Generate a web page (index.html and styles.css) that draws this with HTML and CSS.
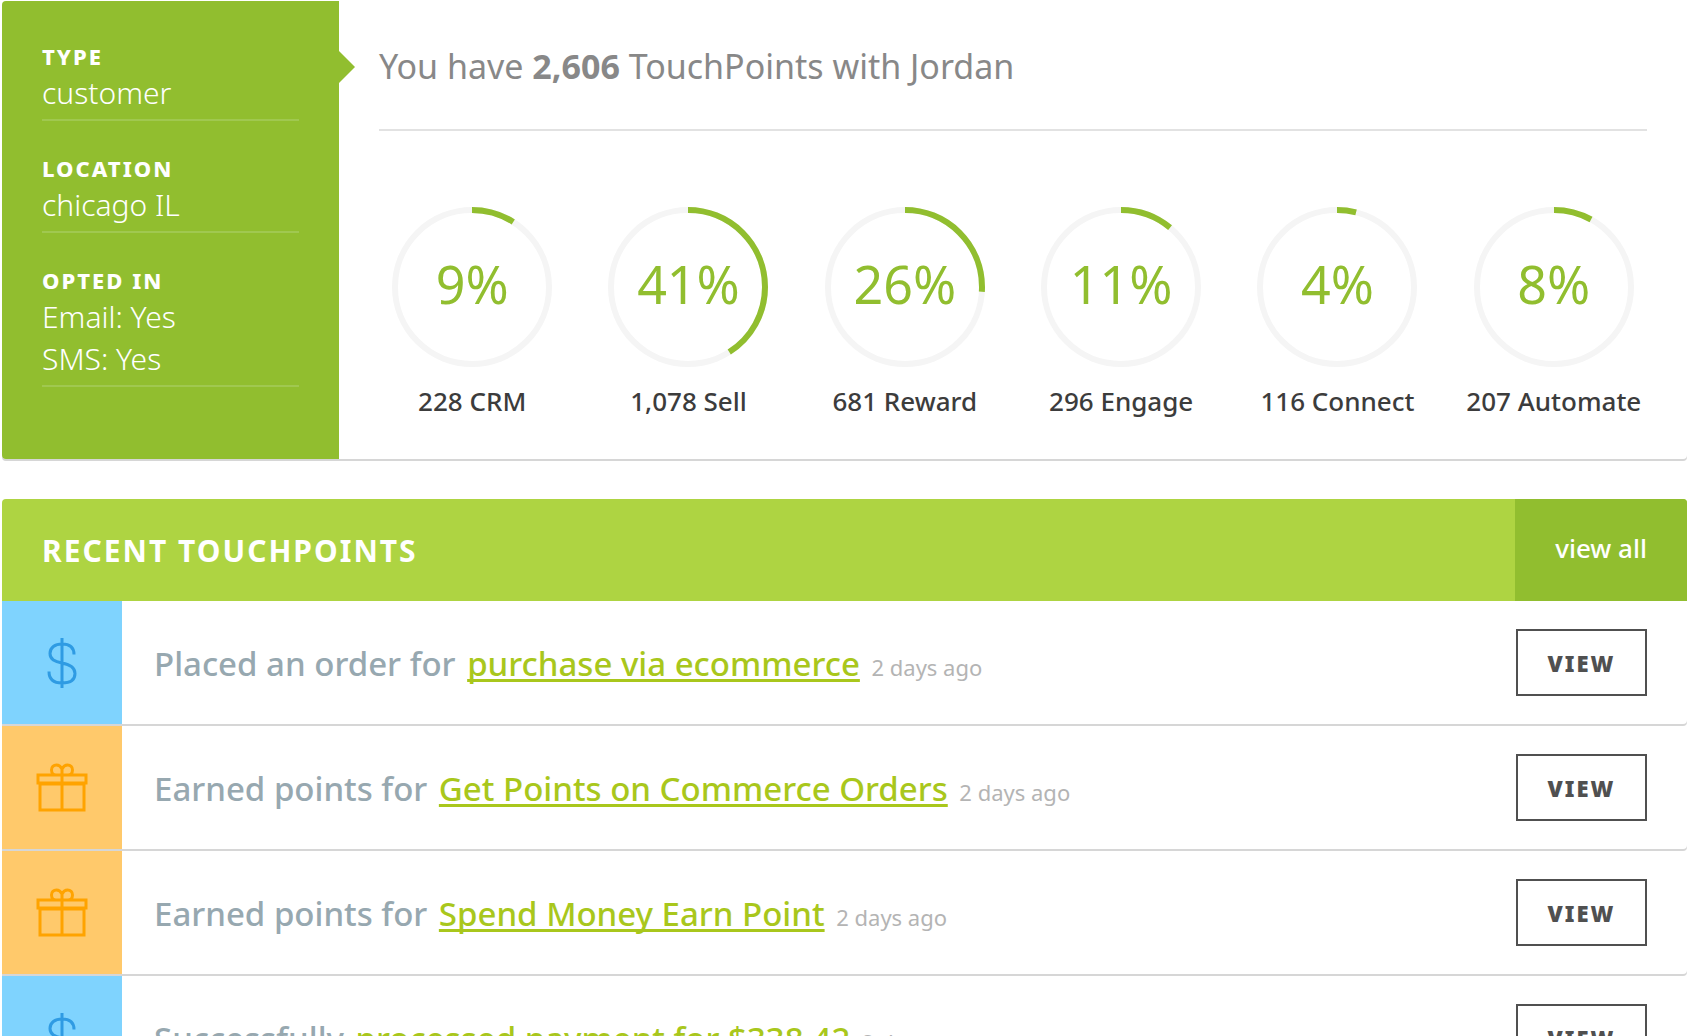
FILE: index.html
```html
<!DOCTYPE html>
<html lang="en">
<head>
    <meta charset="UTF-8">
    <meta name="viewport" content="width=device-width, initial-scale=1.0">
    <title>Customer TouchPoints</title>
    <link rel="stylesheet" href="styles.css">
</head>
<body>
    <!-- shared icons -->
    <svg class="icon-defs" aria-hidden="true">
        <symbol id="icon-dollar" viewBox="0 0 52 52">
            <path d="M26 1v50M38 17.500C38 10 33 7 26 7S14 10.500 14 16.500c0 6 5 8 12 9.500 8 1.500 13 4 13 10.500S34 46 26 46 13 42.500 13 34.500"/>
        </symbol>
        <symbol id="icon-gift" viewBox="0 0 52 52">
            <path d="M2 13h48v8H2zM4 22h44v26H4zM26 6v42M26 7c-1-2-3-4-5.500-4C17.500 3 15.500 5 15.500 8s2 5 4.500 5M26 7c1-2 3-4 5.500-4C34.500 3 36.500 5 36.500 8s-2 5-4.500 5"/>
        </symbol>
    </svg>

    <section class="card summary">
        <aside class="sidebar">
            <dl class="info">
                <dt>TYPE</dt>
                <dd>customer</dd>
            </dl>
            <dl class="info">
                <dt>LOCATION</dt>
                <dd>chicago IL</dd>
            </dl>
            <dl class="info">
                <dt>OPTED IN</dt>
                <dd>Email: Yes</dd>
                <dd>SMS: Yes</dd>
            </dl>
        </aside>
        <div class="overview">
            <h1>You have <strong>2,606</strong> TouchPoints with Jordan</h1>
            <div class="charts">
                <div class="chart">
                    <div class="ring">
                        <svg viewBox="0 0 160 160"><circle cx="80" cy="80" r="77"/><circle class="value" cx="80" cy="80" r="77" pathLength="100" stroke-dasharray="9 100"/></svg>
                        <span>9%</span>
                    </div>
                    <p>228 CRM</p>
                </div>
                <div class="chart">
                    <div class="ring">
                        <svg viewBox="0 0 160 160"><circle cx="80" cy="80" r="77"/><circle class="value" cx="80" cy="80" r="77" pathLength="100" stroke-dasharray="41 100"/></svg>
                        <span>41%</span>
                    </div>
                    <p>1,078 Sell</p>
                </div>
                <div class="chart">
                    <div class="ring">
                        <svg viewBox="0 0 160 160"><circle cx="80" cy="80" r="77"/><circle class="value" cx="80" cy="80" r="77" pathLength="100" stroke-dasharray="26 100"/></svg>
                        <span>26%</span>
                    </div>
                    <p>681 Reward</p>
                </div>
                <div class="chart">
                    <div class="ring">
                        <svg viewBox="0 0 160 160"><circle cx="80" cy="80" r="77"/><circle class="value" cx="80" cy="80" r="77" pathLength="100" stroke-dasharray="11 100"/></svg>
                        <span>11%</span>
                    </div>
                    <p>296 Engage</p>
                </div>
                <div class="chart">
                    <div class="ring">
                        <svg viewBox="0 0 160 160"><circle cx="80" cy="80" r="77"/><circle class="value" cx="80" cy="80" r="77" pathLength="100" stroke-dasharray="4 100"/></svg>
                        <span>4%</span>
                    </div>
                    <p>116 Connect</p>
                </div>
                <div class="chart">
                    <div class="ring">
                        <svg viewBox="0 0 160 160"><circle cx="80" cy="80" r="77"/><circle class="value" cx="80" cy="80" r="77" pathLength="100" stroke-dasharray="8 100"/></svg>
                        <span>8%</span>
                    </div>
                    <p>207 Automate</p>
                </div>
            </div>
        </div>
    </section>

    <section class="recent">
        <header class="recent-header">
            <h2>RECENT TOUCHPOINTS</h2>
            <a href="#" class="view-all">view all</a>
        </header>
        <ul class="feed">
            <li class="card">
                <div class="feed-icon order"><svg><use href="#icon-dollar"/></svg></div>
                <p>Placed an order for <a href="#">purchase via ecommerce</a> <time>2 days ago</time></p>
                <button type="button">VIEW</button>
            </li>
            <li class="card">
                <div class="feed-icon reward"><svg><use href="#icon-gift"/></svg></div>
                <p>Earned points for <a href="#">Get Points on Commerce Orders</a> <time>2 days ago</time></p>
                <button type="button">VIEW</button>
            </li>
            <li class="card">
                <div class="feed-icon reward"><svg><use href="#icon-gift"/></svg></div>
                <p>Earned points for <a href="#">Spend Money Earn Point</a> <time>2 days ago</time></p>
                <button type="button">VIEW</button>
            </li>
            <li class="card">
                <div class="feed-icon order"><svg><use href="#icon-dollar"/></svg></div>
                <p>Successfully <a href="#">processed payment for $338.42</a> <time>2 days ago</time></p>
                <button type="button">VIEW</button>
            </li>
        </ul>
    </section>
</body>
</html>
```
FILE: styles.css
```css
* {
    box-sizing: border-box;
}

body {
    margin: 1px 5px 0 2px;
    background: #fff;
    font-family: "Noto Sans", "Open Sans", sans-serif;
}

h1, h2, p, dl, dd, ul {
    margin: 0;
    padding: 0;
}

.icon-defs {
    display: none;
}

.card {
    display: flex;
    margin-bottom: 2px;
    background: #fff;
    border-radius: 4px;
    box-shadow: 0 2px 0 #d6d6d6;
}

/* summary */
.summary {
    margin-bottom: 40px;
}

.sidebar {
    position: relative;
    width: 20%;
    padding: 39px 40px 71px;
    background: #91be2f;
    border-radius: 4px 0 0 4px;
    color: #fff;
}

.sidebar::after {
    content: "";
    position: absolute;
    top: 50px;
    left: 100%;
    border: 16px solid transparent;
    border-left-color: #91be2f;
    border-right: 0;
}

.info {
    padding-bottom: 5px;
    border-bottom: 2px solid #a0c850;
}

.info + .info {
    margin-top: 31px;
}

.info dt {
    font-size: 22px;
    font-weight: 800;
    line-height: 32px;
    letter-spacing: 2px;
}

.info dd {
    font-size: 30px;
    font-weight: 300;
    line-height: 42px;
}

.overview {
    flex: 1;
    padding: 2px 40px 38px;
}

.overview h1 {
    border-bottom: 2px solid #e2e2e2;
    color: #888;
    font-size: 34px;
    font-weight: 400;
    line-height: 126px;
}

.overview h1 strong {
    font-weight: 700;
}

.charts {
    display: grid;
    grid-template-columns: repeat(6, 1fr);
    margin: 76px -15px 0;
}

.chart p {
    margin-top: 14px;
    color: #3c3c3c;
    font-size: 26px;
    font-weight: 500;
    line-height: 40px;
    text-align: center;
    white-space: nowrap;
}

.ring {
    position: relative;
    width: 160px;
    height: 160px;
    margin: 0 auto;
}

.ring svg {
    display: block;
    transform: rotate(-90deg);
}

.ring circle {
    fill: none;
    stroke: #f5f5f5;
    stroke-width: 6;
}

.ring .value {
    stroke: #91be2f;
}

.ring span {
    position: absolute;
    top: 0;
    width: 100%;
    color: #91be2f;
    font-size: 52px;
    font-weight: 400;
    line-height: 154px;
    text-align: center;
}

/* recent touchpoints */
.recent-header {
    display: flex;
    justify-content: space-between;
    height: 102px;
    background: #aed442;
    border-radius: 4px 4px 0 0;
    color: #fff;
}

.recent-header h2 {
    padding-left: 40px;
    font-size: 30px;
    font-weight: 700;
    line-height: 104px;
    letter-spacing: 2px;
}

.view-all {
    padding: 0 40px;
    background: #91be2f;
    border-radius: 0 4px 0 0;
    color: #fff;
    font-size: 26px;
    font-weight: 500;
    line-height: 98px;
    text-decoration: none;
}

.feed {
    list-style: none;
}

.feed li {
    align-items: center;
    padding-right: 40px;
    border-radius: 0 0 4px 0;
}

.feed-icon {
    display: flex;
    justify-content: center;
    align-items: center;
    width: 120px;
    height: 123px;
}

.feed-icon svg {
    width: 52px;
    height: 52px;
    fill: none;
    stroke-width: 3;
}

.feed-icon.order {
    background: #7fd3fe;
    stroke: #2f9be3;
}

.feed-icon.reward {
    background: #ffc96b;
    stroke: #ffa300;
}

.feed p {
    flex: 1;
    padding: 2px 0 0 32px;
    color: #97a8b0;
    font-size: 33px;
    font-weight: 500;
    line-height: 46px;
}

.feed a {
    margin: 0 3px;
    color: #a9c71c;
    text-decoration-thickness: 3px;
    text-underline-offset: 3px;
    text-decoration-skip-ink: none;
}

.feed time {
    color: #b4b4b4;
    font-size: 22px;
    font-weight: 400;
    line-height: 22px;
}

.feed button {
    width: 131px;
    height: 67px;
    padding: 0;
    background: #fff;
    border: 2px solid #505050;
    color: #505050;
    font-family: inherit;
    font-size: 22px;
    font-weight: 900;
    letter-spacing: 2px;
    cursor: pointer;
}
```
